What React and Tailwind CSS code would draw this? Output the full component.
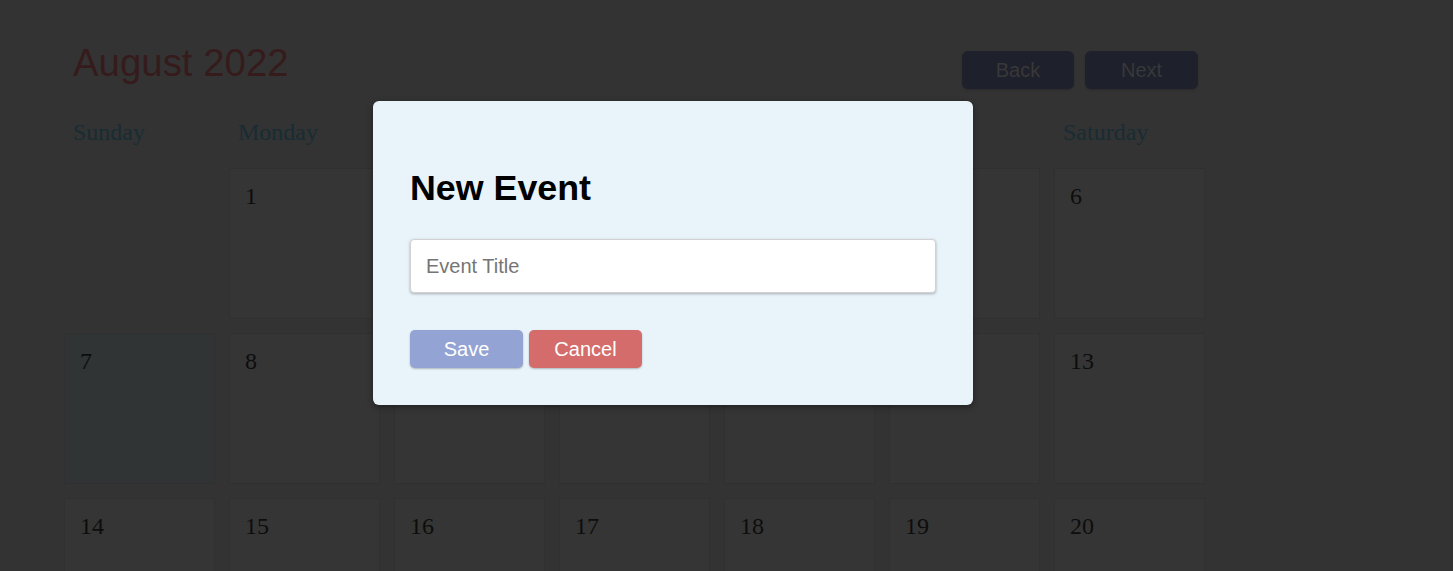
import React from "react";

const days = ["Sunday", "Monday", "Tuesday", "Wednesday", "Thursday", "Friday", "Saturday"];

function buildCells() {
  const cells = [null];
  for (let d = 1; d <= 31; d++) cells.push(d);
  while (cells.length % 7 !== 0) cells.push(null);
  return cells;
}

export default function App() {
  const cells = buildCells();
  return (
    <div className="relative h-[571px] w-full overflow-hidden bg-[#333333]">
      <div className="ml-[64px] w-[1141px]">
        <div className="flex h-[89px] items-start justify-between pr-[7px]">
          <h1 className="mt-[41px] pl-[9px] font-['Liberation_Sans',Arial,sans-serif] text-[38.4px] leading-[44px] text-[#361b1c]">
            August 2022
          </h1>
          <div className="mt-[51px] flex gap-[11px]">
            <button className="h-[38px] w-[112px] rounded-[6px] bg-[#1e202c] font-['Liberation_Sans',Arial,sans-serif] text-[20px] text-[#383838] shadow-[0_1px_2px_rgba(0,0,0,0.2)]">
              Back
            </button>
            <button className="h-[38px] w-[113px] rounded-[6px] bg-[#1e202c] font-['Liberation_Sans',Arial,sans-serif] text-[20px] text-[#383838] shadow-[0_1px_2px_rgba(0,0,0,0.2)]">
              Next
            </button>
          </div>
        </div>

        <div className="mt-[30px] grid grid-cols-7 gap-x-[14px]">
          {days.map((d) => (
            <div
              key={d}
              className="pl-[9px] font-['Liberation_Serif','Times_New_Roman',serif] text-[24px] leading-[27.6px] text-[#182c33]"
            >
              {d}
            </div>
          ))}
        </div>

        <div className="mt-[21px] grid grid-cols-7 gap-x-[14px] gap-y-[14.4px]">
          {cells.map((c, i) =>
            c === null ? (
              <div key={i} className="h-[151px]" />
            ) : (
              <div
                key={i}
                className={
                  "h-[151px] border border-[#303030] px-[15px] pt-[14px] font-['Liberation_Serif','Times_New_Roman',serif] text-[24px] leading-[27.6px] text-[#0d0d0d] " +
                  (c === 7 ? "bg-[#303434]" : "bg-[#353535]")
                }
              >
                {c}
              </div>
            )
          )}
        </div>
      </div>

      <div className="absolute left-[373px] top-[101px] w-[600px] rounded-[6px] bg-[#e8f3fa] px-[37px] pb-[37px] pt-[67px] shadow-[0_2px_6px_rgba(0,0,0,0.4)] font-['Liberation_Sans',Arial,sans-serif]">
        <h2 className="text-[35.8px] font-bold leading-[41px] text-black">New Event</h2>
        <input
          type="text"
          placeholder="Event Title"
          className="mt-[30px] block h-[54px] w-full rounded-[4px] border border-[#d2d2d2] bg-white px-[15px] text-[20px] text-black placeholder:text-[#757575] shadow-[0_1px_3px_rgba(0,0,0,0.28)] outline-none"
        />
        <div className="mt-[37px] flex gap-[6px]">
          <button className="h-[38px] w-[113px] rounded-[5px] bg-[#93a3d3] text-[20px] text-white shadow-[0_1px_2px_rgba(0,0,0,0.25)]">
            Save
          </button>
          <button className="h-[38px] w-[113px] rounded-[5px] bg-[#d46c6c] text-[20px] text-white shadow-[0_1px_2px_rgba(0,0,0,0.25)]">
            Cancel
          </button>
        </div>
      </div>
    </div>
  );
}
